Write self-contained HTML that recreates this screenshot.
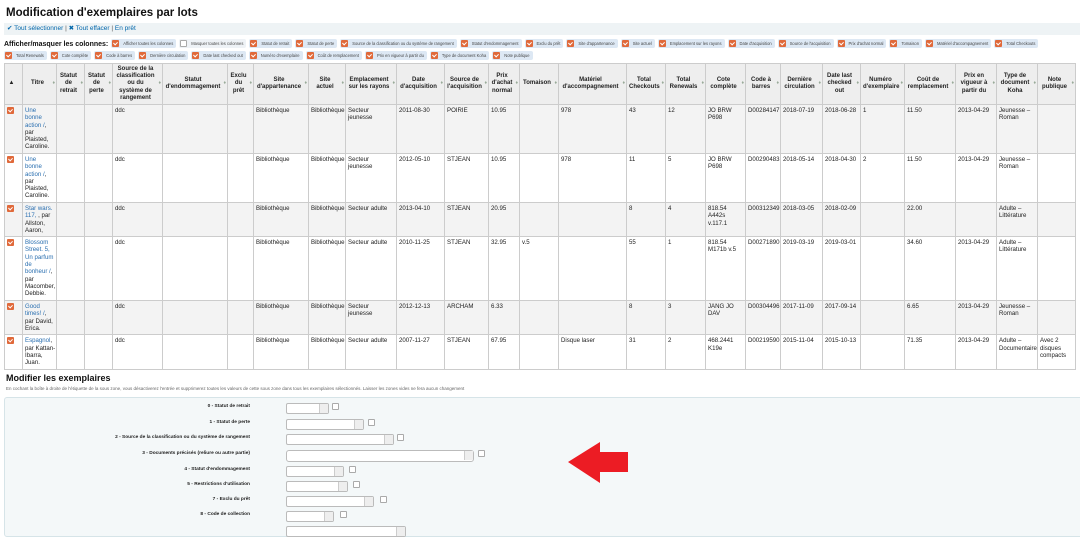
<!DOCTYPE html>
<html><head><meta charset="utf-8"><style>
*{box-sizing:border-box}
body{margin:0;width:1080px;height:528px;overflow:hidden;background:#fff;font-family:"Liberation Sans",sans-serif;color:#222;position:relative}
h1{position:absolute;left:6px;top:7px;margin:0;font-size:11.5px;font-weight:bold;color:#111}
.bar{position:absolute;left:4px;top:23px;width:1076px;height:12px;background:#eef3f5;font-size:6.5px;line-height:12px;padding-left:3px;color:#0066aa}
.bar span{color:#555}
.cols{position:absolute;left:4px;top:39px;width:1076px;font-size:6px;line-height:11px;white-space:nowrap}
.cols b{font-size:7px;color:#111;margin-right:3px}
.tg{display:inline-block;background:#dde8f4;border-radius:2px;padding:0 3px 0 1px;margin:0 3px 2px 0;height:9px;line-height:9px;font-size:4.1px;color:#444;vertical-align:top}
.tg i{display:inline-block;width:7px;height:7px;background:#e0693a;border-radius:1px;margin:1px 4px 0 0;vertical-align:top;position:relative}
.tg i:after{content:"";position:absolute;left:2px;top:1px;width:2px;height:3px;border:solid #fff;border-width:0 1px 1px 0;transform:rotate(45deg)}
.tg.u{background:#eef2f6}.tg.u i{background:#fff;border:1px solid #aaa}.tg.u i:after{display:none}
table{position:absolute;left:4px;top:63px;border-collapse:collapse;table-layout:fixed;width:1071px;font-size:6.1px}
td,th{border:1px solid #ccc;vertical-align:top;padding:2px 2px;line-height:7.3px;overflow:hidden}
td:nth-child(2){white-space:nowrap}
th{background:#eee;font-weight:bold;vertical-align:middle;text-align:center;height:41px;font-size:6px;line-height:7.3px;padding:1px 6px 1px 2px;color:#222;position:relative;overflow:visible}
th:after{content:"♦";position:absolute;right:1px;top:50%;margin-top:-4px;color:#9a9;font-size:5px}
th:first-child:after{content:""}
tr.g td{background:#f3f3f3}
td a{color:#2a6fb0;text-decoration:none}
.cb{display:inline-block;width:7px;height:7px;background:#e0693a;border-radius:1px;position:relative}
.cb:after{content:"";position:absolute;left:2px;top:1px;width:2px;height:3px;border:solid #fff;border-width:0 1px 1px 0;transform:rotate(45deg)}
h2{position:absolute;left:6px;top:373px;margin:0;font-size:9px;font-weight:bold;color:#111}
.note{position:absolute;left:6px;top:386px;font-size:4.5px;color:#666}
.box{position:absolute;left:4px;top:397px;width:1080px;height:140px;background:#f4f8f9;border:1px solid #d6e4e8;border-radius:3px}
.lab{position:absolute;right:830px;font-size:4.8px;font-weight:bold;color:#222;text-align:right;white-space:nowrap}
.sel{position:absolute;left:286px;height:11px;background:#fff;border:1px solid #bbb;border-radius:2px}
.sel:after{content:"";position:absolute;right:0;top:0;width:8px;height:9px;background:#eee;border-left:1px solid #ccc}
.ck{position:absolute;width:7px;height:7px;border:1px solid #aaa;background:#fff;border-radius:1px}
</style></head><body>
<h1>Modification d'exemplaires par lots</h1>
<div class="bar">✔ Tout sélectionner <span>|</span> ✖ Tout effacer <span>|</span> En prêt</div>
<div class="cols"><b>Afficher/masquer les colonnes:</b><span class="tg"><i></i>Afficher toutes les colonnes</span><span class="tg u"><i></i>Masquer toutes les colonnes</span><span class="tg"><i></i>Statut de retrait</span><span class="tg"><i></i>Statut de perte</span><span class="tg"><i></i>Source de la classification ou du système de rangement</span><span class="tg"><i></i>Statut d'endommagement</span><span class="tg"><i></i>Exclu du prêt</span><span class="tg"><i></i>Site d'appartenance</span><span class="tg"><i></i>Site actuel</span><span class="tg"><i></i>Emplacement sur les rayons</span><span class="tg"><i></i>Date d'acquisition</span><span class="tg"><i></i>Source de l'acquisition</span><span class="tg"><i></i>Prix d'achat normal</span><span class="tg"><i></i>Tomaison</span><span class="tg"><i></i>Matériel d'accompagnement</span><span class="tg"><i></i>Total Checkouts</span><br><span class="tg"><i></i>Total Renewals</span><span class="tg"><i></i>Cote complète</span><span class="tg"><i></i>Code à barres</span><span class="tg"><i></i>Dernière circulation</span><span class="tg"><i></i>Date last checked out</span><span class="tg"><i></i>Numéro d'exemplaire</span><span class="tg"><i></i>Coût de remplacement</span><span class="tg"><i></i>Prix en vigueur à partir du</span><span class="tg"><i></i>Type de document Koha</span><span class="tg"><i></i>Note publique</span></div>
<table>
<colgroup><col style="width:18px"><col style="width:34px"><col style="width:28px"><col style="width:28px"><col style="width:50px"><col style="width:65px"><col style="width:26px"><col style="width:55px"><col style="width:37px"><col style="width:51px"><col style="width:48px"><col style="width:44px"><col style="width:31px"><col style="width:39px"><col style="width:68px"><col style="width:39px"><col style="width:40px"><col style="width:40px"><col style="width:35px"><col style="width:42px"><col style="width:38px"><col style="width:44px"><col style="width:51px"><col style="width:41px"><col style="width:41px"><col style="width:38px"></colgroup>
<tr><th>▲</th><th>Titre</th><th>Statut de retrait</th><th>Statut de perte</th><th>Source de la classification ou du système de rangement</th><th>Statut d'endommagement</th><th>Exclu du prêt</th><th>Site d'appartenance</th><th>Site actuel</th><th>Emplacement sur les rayons</th><th>Date d'acquisition</th><th>Source de l'acquisition</th><th>Prix d'achat normal</th><th>Tomaison</th><th>Matériel d'accompagnement</th><th>Total Checkouts</th><th>Total Renewals</th><th>Cote complète</th><th>Code à barres</th><th>Dernière circulation</th><th>Date last checked out</th><th>Numéro d'exemplaire</th><th>Coût de remplacement</th><th>Prix en vigueur à partir du</th><th>Type de document Koha</th><th>Note publique</th></tr>
<tr class="g" style="height:49px"><td><span class="cb"></span></td><td><a>Une<br>bonne<br>action /</a>,<br>par<br>Plaisted,<br>Caroline.</td><td></td><td></td><td>ddc</td><td></td><td></td><td>Bibliothèque</td><td>Bibliothèque</td><td>Secteur<br>jeunesse</td><td>2011-08-30</td><td>POIRIE</td><td>10.95</td><td></td><td>978</td><td>43</td><td>12</td><td>JO BRW P698</td><td>D00284147</td><td>2018-07-19</td><td>2018-06-28</td><td>1</td><td>11.50</td><td>2013-04-29</td><td>Jeunesse – Roman</td><td></td></tr>
<tr style="height:49px"><td><span class="cb"></span></td><td><a>Une<br>bonne<br>action /</a>,<br>par<br>Plaisted,<br>Caroline.</td><td></td><td></td><td>ddc</td><td></td><td></td><td>Bibliothèque</td><td>Bibliothèque</td><td>Secteur<br>jeunesse</td><td>2012-05-10</td><td>STJEAN</td><td>10.95</td><td></td><td>978</td><td>11</td><td>5</td><td>JO BRW P698</td><td>D00290483</td><td>2018-05-14</td><td>2018-04-30</td><td>2</td><td>11.50</td><td>2013-04-29</td><td>Jeunesse – Roman</td><td></td></tr>
<tr class="g" style="height:34px"><td><span class="cb"></span></td><td><a>Star wars.<br>117, </a>, par<br>Allston,<br>Aaron,</td><td></td><td></td><td>ddc</td><td></td><td></td><td>Bibliothèque</td><td>Bibliothèque</td><td>Secteur adulte</td><td>2013-04-10</td><td>STJEAN</td><td>20.95</td><td></td><td></td><td>8</td><td>4</td><td>818.54 A442s v.117.1</td><td>D00312349</td><td>2018-03-05</td><td>2018-02-09</td><td></td><td>22.00</td><td></td><td>Adulte – Littérature</td><td></td></tr>
<tr style="height:64px"><td><span class="cb"></span></td><td><a>Blossom<br>Street. 5,<br>Un parfum<br>de<br>bonheur /</a>,<br>par<br>Macomber,<br>Debbie.</td><td></td><td></td><td>ddc</td><td></td><td></td><td>Bibliothèque</td><td>Bibliothèque</td><td>Secteur adulte</td><td>2010-11-25</td><td>STJEAN</td><td>32.95</td><td>v.5</td><td></td><td>55</td><td>1</td><td>818.54 M171b v.5</td><td>D00271890</td><td>2019-03-19</td><td>2019-03-01</td><td></td><td>34.60</td><td>2013-04-29</td><td>Adulte – Littérature</td><td></td></tr>
<tr class="g" style="height:34px"><td><span class="cb"></span></td><td><a>Good<br>times! /</a>,<br>par David,<br>Erica.</td><td></td><td></td><td>ddc</td><td></td><td></td><td>Bibliothèque</td><td>Bibliothèque</td><td>Secteur<br>jeunesse</td><td>2012-12-13</td><td>ARCHAM</td><td>6.33</td><td></td><td></td><td>8</td><td>3</td><td>JANG JO DAV</td><td>D00304496</td><td>2017-11-09</td><td>2017-09-14</td><td></td><td>6.65</td><td>2013-04-29</td><td>Jeunesse – Roman</td><td></td></tr>
<tr style="height:34px"><td><span class="cb"></span></td><td><a>Espagnol</a>,<br>par Kattan-<br>Ibarra,<br>Juan.</td><td></td><td></td><td>ddc</td><td></td><td></td><td>Bibliothèque</td><td>Bibliothèque</td><td>Secteur adulte</td><td>2007-11-27</td><td>STJEAN</td><td>67.95</td><td></td><td>Disque laser</td><td>31</td><td>2</td><td>468.2441 K19e</td><td>D00219590</td><td>2015-11-04</td><td>2015-10-13</td><td></td><td>71.35</td><td>2013-04-29</td><td>Adulte – Documentaires</td><td>Avec 2 disques compacts</td></tr>
</table>
<h2>Modifier les exemplaires</h2>
<div class="note">En cochant la boîte à droite de l'étiquette de la sous zone, vous désactiverez l'entrée et supprimerez toutes les valeurs de cette sous zone dans tous les exemplaires sélectionnés. Laisser les zones vides ne fera aucun changement</div>
<div class="box"></div>
<div class="lab" style="top:404px">0 - Statut de retrait</div><div class="sel" style="top:403px;width:43px"></div><div class="ck" style="left:332px;top:403px"></div>
<div class="lab" style="top:420px">1 - Statut de perte</div><div class="sel" style="top:419px;width:78px"></div><div class="ck" style="left:368px;top:419px"></div>
<div class="lab" style="top:435px">2 - Source de la classification ou du système de rangement</div><div class="sel" style="top:434px;width:108px"></div><div class="ck" style="left:397px;top:434px"></div>
<div class="lab" style="top:451px">3 - Documents précisés (reliure ou autre partie)</div><div class="sel" style="top:450px;width:188px;height:12px;border-radius:3px"></div><div class="ck" style="left:478px;top:450px"></div>
<div class="lab" style="top:467px">4 - Statut d'endommagement</div><div class="sel" style="top:466px;width:58px"></div><div class="ck" style="left:349px;top:466px"></div>
<div class="lab" style="top:482px">5 - Restrictions d'utilisation</div><div class="sel" style="top:481px;width:62px"></div><div class="ck" style="left:353px;top:481px"></div>
<div class="lab" style="top:497px">7 - Exclu du prêt</div><div class="sel" style="top:496px;width:88px"></div><div class="ck" style="left:380px;top:496px"></div>
<div class="lab" style="top:512px">8 - Code de collection</div><div class="sel" style="top:511px;width:48px"></div><div class="ck" style="left:340px;top:511px"></div>
<div class="sel" style="top:526px;width:120px"></div>
<svg style="position:absolute;left:566px;top:441px" width="64" height="44"><polygon points="2,21 34,1 34,11 62,11 62,31 34,31 34,42" fill="#ec1c24"/></svg>
</body></html>
